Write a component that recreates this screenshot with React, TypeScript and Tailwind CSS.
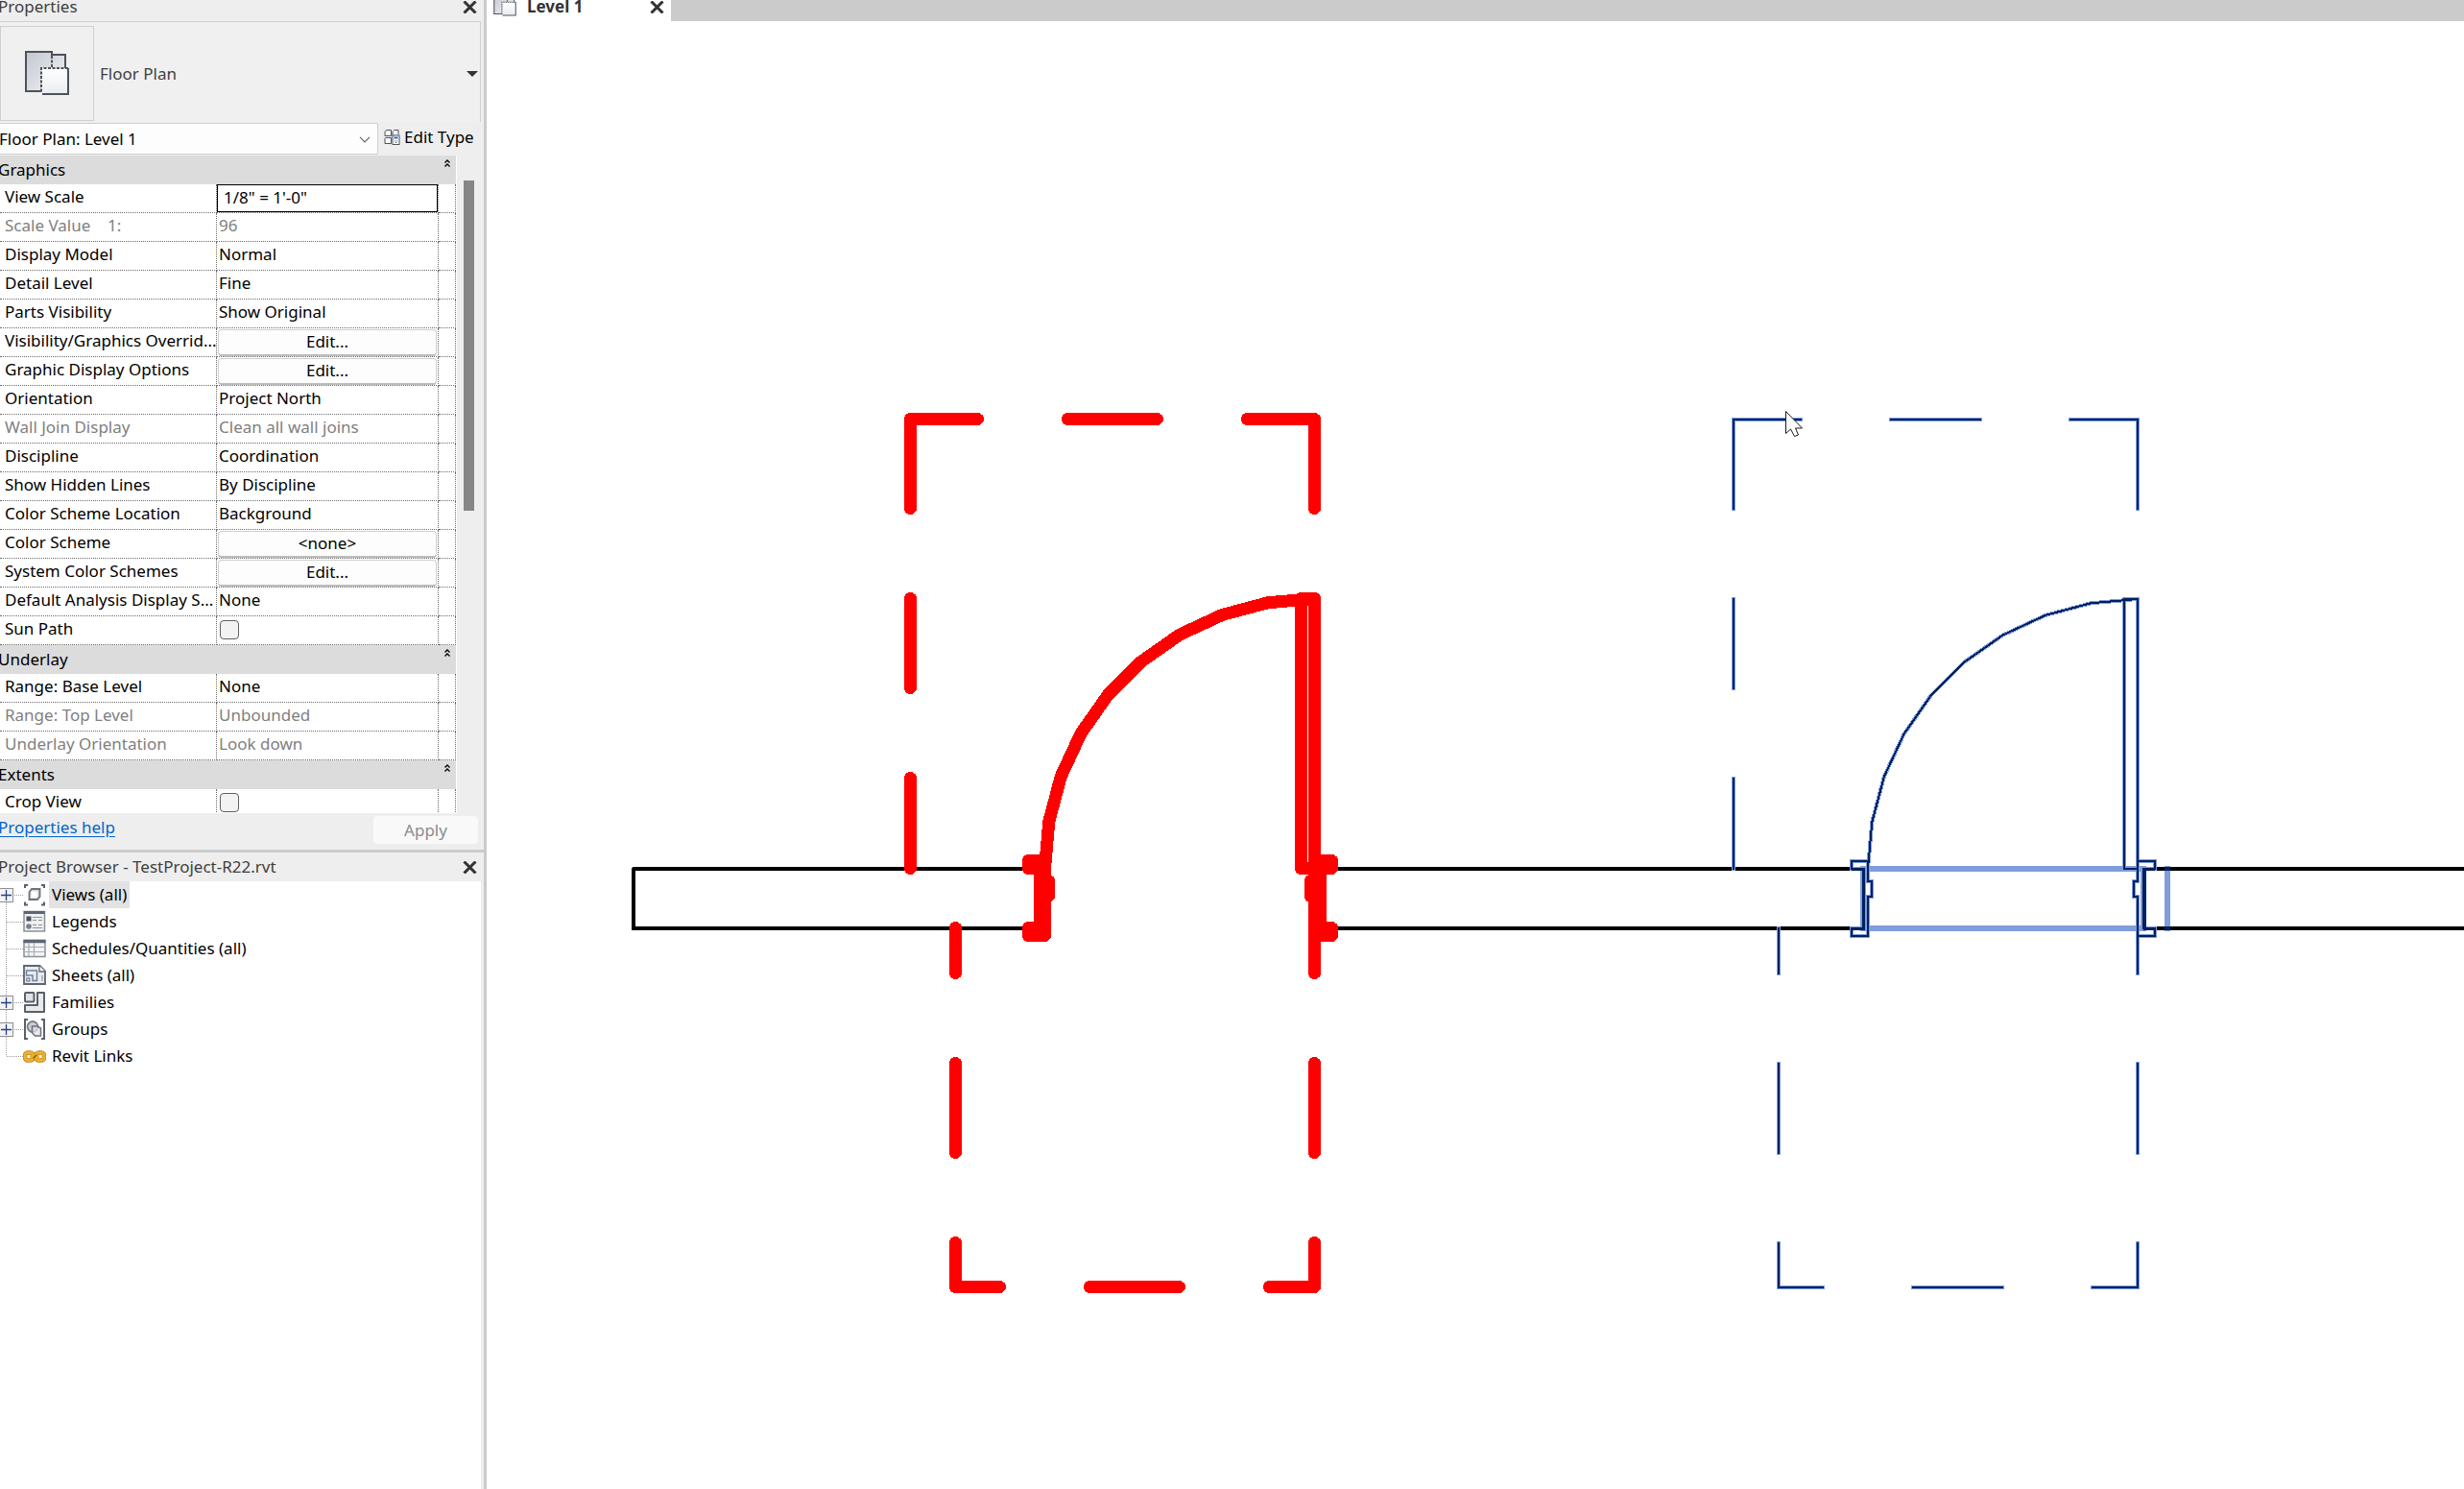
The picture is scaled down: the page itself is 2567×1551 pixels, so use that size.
import { useState } from "react";
import type { ReactNode } from "react";

type Row = {
  label: string;
  kind: "text" | "input" | "button" | "check";
  value?: string;
  disabled?: boolean;
};

type Section = { title: string; rows: Row[] };

const sections: Section[] = [
  {
    title: "Graphics",
    rows: [
      { label: "View Scale", kind: "input", value: "1/8\" = 1'-0\"" },
      { label: "Scale Value    1:", kind: "text", value: "96", disabled: true },
      { label: "Display Model", kind: "text", value: "Normal" },
      { label: "Detail Level", kind: "text", value: "Fine" },
      { label: "Parts Visibility", kind: "text", value: "Show Original" },
      { label: "Visibility/Graphics Overrid...", kind: "button", value: "Edit..." },
      { label: "Graphic Display Options", kind: "button", value: "Edit..." },
      { label: "Orientation", kind: "text", value: "Project North" },
      { label: "Wall Join Display", kind: "text", value: "Clean all wall joins", disabled: true },
      { label: "Discipline", kind: "text", value: "Coordination" },
      { label: "Show Hidden Lines", kind: "text", value: "By Discipline" },
      { label: "Color Scheme Location", kind: "text", value: "Background" },
      { label: "Color Scheme", kind: "button", value: "<none>" },
      { label: "System Color Schemes", kind: "button", value: "Edit..." },
      { label: "Default Analysis Display S...", kind: "text", value: "None" },
      { label: "Sun Path", kind: "check" },
    ],
  },
  {
    title: "Underlay",
    rows: [
      { label: "Range: Base Level", kind: "text", value: "None" },
      { label: "Range: Top Level", kind: "text", value: "Unbounded", disabled: true },
      { label: "Underlay Orientation", kind: "text", value: "Look down", disabled: true },
    ],
  },
  {
    title: "Extents",
    rows: [{ label: "Crop View", kind: "check" }],
  },
];

/* ---------- icons ---------- */

function PlanIcon({ className }: { className: string }) {
  return (
    <svg viewBox="0 0 46 47" className={className} aria-hidden="true">
      <defs>
        <linearGradient id="planBack" x1="0" y1="0" x2="1" y2="1">
          <stop offset="0" stopColor="#c3c7d1" />
          <stop offset="1" stopColor="#f6f7f8" />
        </linearGradient>
        <linearGradient id="planFront" x1="0" y1="0" x2="0" y2="1">
          <stop offset="0" stopColor="#ffffff" />
          <stop offset="1" stopColor="#e9edef" />
        </linearGradient>
      </defs>
      <path d="M1 1H28V3H42V18H45V45H18V42H1Z" fill="url(#planBack)" />
      <rect x="17" y="18" width="28" height="27" fill="url(#planFront)" />
      <path d="M17 42H1V1H28V4H42V18" fill="none" stroke="#4d525b" strokeWidth="2" />
      <path d="M45 18V45H18" fill="none" stroke="#4d525b" strokeWidth="2" />
      <path d="M28 5V18M45 18H17V44" fill="none" stroke="#4d525b" strokeWidth="2" strokeDasharray="3 1.5" />
    </svg>
  );
}

function CloseIcon() {
  return (
    <svg viewBox="0 0 15 13" className="h-[13px] w-[15px]" aria-hidden="true">
      <path d="M1.5 0.5L13.5 12.5M13.5 0.5L1.5 12.5" stroke="#333" strokeWidth="3" />
    </svg>
  );
}

function EditTypeIcon() {
  return (
    <svg viewBox="0 0 17 16" className="h-4 w-[17px]" aria-hidden="true">
      <path d="M1.5 1.5L3 .5H7.500V6.500H1V2ZM9.500 1.500L10.500 .5H15V5M9 2V6.500M1 9V14.500H7.500V8.500H1.500" fill="#f7f8fa" stroke="#4d525b" />
      <rect x="9" y="6" width="7" height="9.500" fill="#fff" stroke="#4d525b" />
      <path d="M10.500 8.500H14.500" stroke="#1f6fc4" strokeWidth="2" />
      <path d="M11 12H12M13 12H14M12 13.500H13" stroke="#4d525b" />
    </svg>
  );
}

function Collapse() {
  return (
    <svg viewBox="0 0 6 8" className="h-2 w-1.5" aria-hidden="true">
      <path d="M.5 3.500L3 1L5.500 3.500M.5 7.500L3 5L5.500 7.500" fill="none" stroke="#000" strokeWidth="1.300" />
    </svg>
  );
}

function TreeIcon({ children }: { children: ReactNode }) {
  return (
    <svg viewBox="0 0 24 24" className="h-6 w-6 shrink-0" fill="none" stroke="#5b6069" strokeWidth="1.800" aria-hidden="true">
      {children}
    </svg>
  );
}

const treeItems: { label: string; expandable?: boolean; icon: ReactNode }[] = [
  {
    label: "Views (all)",
    expandable: true,
    icon: (
      <TreeIcon>
        <path d="M5 2H2V5M19 2H22V5M5 22.500H2V19.500M19 22.500H22V19.500" strokeWidth="2" />
        <path d="M6.500 9L9 6H17.500V14L15 17H6.500Z" fill="#d8dbe0" stroke="#6c717a" />
        <rect x="8.500" y="8.500" width="6.500" height="6.500" fill="#fff" stroke="none" />
      </TreeIcon>
    ),
  },
  {
    label: "Legends",
    icon: (
      <TreeIcon>
        <rect x="1" y="1.500" width="21.500" height="20.500" fill="#eef0f2" stroke="#8b9099" strokeWidth="1.500" />
        <path d="M1 2.500H22.500" stroke="#5b6573" strokeWidth="3" />
        <rect x="3.500" y="6.500" width="5" height="5" fill="#4d525b" stroke="none" />
        <circle cx="6" cy="17" r="2.800" fill="#7b8089" stroke="none" />
        <path d="M10 7.500H20M10 10.500H14M16 10.500H20M10 15.500H14M16 15.500H20M10 18.500H20" stroke="#8b9099" strokeWidth="1.200" />
      </TreeIcon>
    ),
  },
  {
    label: "Schedules/Quantities (all)",
    icon: (
      <TreeIcon>
        <rect x="1" y="3.500" width="22" height="17" fill="#f1f3f5" stroke="#8b9099" strokeWidth="1.500" />
        <path d="M.5 4.500H23.500" stroke="#5b6573" strokeWidth="3.500" />
        <path d="M6 6V20M11.500 6V20M1 10.500H23M1 15.500H23" stroke="#a9adb4" strokeWidth="1.200" />
      </TreeIcon>
    ),
  },
  {
    label: "Sheets (all)",
    icon: (
      <TreeIcon>
        <path d="M1 2H17.500L23 7.500V21H1Z" fill="#e8ebef" stroke="#5b6573" />
        <path d="M17 2V8H23" fill="#fff" stroke="#5b6573" strokeWidth="1.300" />
        <path d="M3.500 7H14.500V17.500H10V12H3.500Z" stroke="#71829c" strokeWidth="1.500" />
        <rect x="3.800" y="15" width="3" height="3" stroke="#71829c" strokeWidth="1.200" />
        <path d="M20 12V18" stroke="#8b9099" strokeWidth="1.200" />
      </TreeIcon>
    ),
  },
  {
    label: "Families",
    expandable: true,
    icon: (
      <TreeIcon>
        <rect x="2" y="2" width="9.500" height="9.500" rx="1" fill="#dfe2e6" strokeWidth="2" />
        <path d="M15 2H22V22H2V15H15Z" fill="#e8ebee" strokeLinejoin="round" strokeWidth="2" />
      </TreeIcon>
    ),
  },
  {
    label: "Groups",
    expandable: true,
    icon: (
      <TreeIcon>
        <path d="M5 2H2V22H5M19 2H22V22H19" strokeWidth="2" />
        <circle cx="10" cy="9.500" r="5.500" fill="#c9ced6" stroke="#7b8089" />
        <path d="M9.500 9H15L18.500 11V19H12.500L9.500 16Z" fill="#dfe2ea" fillOpacity="0.7" stroke="#6c717a" strokeWidth="1.500" />
      </TreeIcon>
    ),
  },
  {
    label: "Revit Links",
    icon: (
      <TreeIcon>
        <rect x="2" y="8.500" width="8.500" height="8" rx="3" fill="#fff" stroke="#b97c12" strokeWidth="4.600" />
        <rect x="13.500" y="8.500" width="8.500" height="8" rx="3" fill="#fff" stroke="#b97c12" strokeWidth="4.600" />
        <rect x="2" y="8.500" width="8.500" height="8" rx="3" stroke="#ecb02c" strokeWidth="3.200" />
        <rect x="13.500" y="8.500" width="8.500" height="8" rx="3" stroke="#ecb02c" strokeWidth="3.200" />
        <path d="M7 12.500H17" stroke="#ecb02c" strokeWidth="2.500" />
        <path d="M10.500 14.500L14 11" stroke="#8a4f0b" strokeWidth="1.500" />
      </TreeIcon>
    ),
  },
];

/* ---------- properties palette ---------- */

function PanelTitle({ children }: { children: ReactNode }) {
  return <h2 className="-ml-0.5 text-[#3f3f3f]">{children}</h2>;
}

function ValueCell({ row, id }: { row: Row; id: string }) {
  if (row.kind === "input") {
    return (
      <input
        id={id}
        defaultValue={row.value}
        className="block h-[29px] w-[230px] border border-black bg-white pb-0.5 pl-1.5 text-black outline-none"
      />
    );
  }
  if (row.kind === "button") {
    return (
      <button
        id={id}
        className="ml-px block h-[28px] w-[228px] rounded-[4px] border border-b-2 border-[#d0d0d0] border-b-[#bcbcbc] bg-[#fdfdfd] leading-[24px]"
      >
        {row.value}
      </button>
    );
  }
  if (row.kind === "check") {
    return (
      <input
        id={id}
        type="checkbox"
        className="mb-0.5 ml-[3px] block size-5 appearance-none rounded-[4px] border border-[#606060] bg-[#f3f3f3] checked:bg-[#005fb8]"
      />
    );
  }
  return <span className="block pb-1 pl-0.5">{row.value}</span>;
}

function PropertyGrid() {
  return (
    <table className="w-[475px] table-fixed border-separate border-spacing-0 bg-white">
      <colgroup>
        <col className="w-[226px]" />
        <col className="w-[231px]" />
        <col className="w-[18px]" />
      </colgroup>
      {sections.map((section) => (
        <tbody key={section.title}>
          <tr className="h-[30px] bg-[#dcdcdc]">
            <th colSpan={2} className="p-0 text-left font-normal">
              <span className="-ml-0.5 block">{section.title}</span>
            </th>
            <td className="p-0 align-top">
              <button aria-label={"Collapse " + section.title} className="mt-1 ml-1.5 block">
                <Collapse />
              </button>
            </td>
          </tr>
          {section.rows.map((row) => {
            const id = row.label.replace(/[^A-Za-z]/g, "");
            return (
              <tr key={row.label} className={row.disabled ? "h-[30px] text-[#808080]" : "h-[30px]"}>
                <th className="border-r border-b border-dotted border-[#6b6b6b] p-0 text-left font-normal">
                  <label htmlFor={id} className="block pb-1 pl-[5px] whitespace-pre">
                    {row.label}
                  </label>
                </th>
                <td className="border-r border-b border-dotted border-[#6b6b6b] p-0">
                  <ValueCell row={row} id={id} />
                </td>
                <td className="border-r border-b border-dotted border-[#6b6b6b] p-0" />
              </tr>
            );
          })}
        </tbody>
      ))}
    </table>
  );
}

function PropertiesPanel() {
  return (
    <section>
      <header className="mr-[3px] flex h-[23px] items-start justify-between border-b border-[#cfcfcf] pr-1 leading-[14px]">
        <PanelTitle>Properties</PanelTitle>
        <button aria-label="Close properties" className="mt-px">
          <CloseIcon />
        </button>
      </header>

      <button className="mb-px flex h-[104px] w-[501px] items-center border-r border-[#cfcfcf] bg-[#f0f0f0] pt-[3px] pr-0.5">
        <span className="flex h-[99px] w-[98px] items-center justify-center border border-[#cfcfcf]">
          <PlanIcon className="h-[47px] w-[46px]" />
        </span>
        <span className="grow pl-1.5 text-left text-[#3f3f3f]">Floor Plan</span>
        <svg viewBox="0 0 12 6" className="h-1.5 w-3" aria-hidden="true">
          <path d="M0 0H12L6 6Z" fill="#333" />
        </svg>
      </button>

      <div className="flex h-[34px] items-start">
        <div className="relative">
          <select
            aria-label="View"
            className="-ml-0.5 block h-[33px] w-[396px] appearance-none rounded-[2px] border border-[#cfcfcf] bg-[#fdfdfd] text-black"
          >
            <option>Floor Plan: Level 1</option>
          </select>
          <svg viewBox="0 0 12 7" className="pointer-events-none absolute top-3.5 right-2 h-[7px] w-3" aria-hidden="true">
            <path d="M1 .8L6 5.800L11 .8" fill="none" stroke="#666" strokeWidth="1.200" />
          </svg>
        </div>
        <button className="ml-1.5 flex h-[30px] items-center gap-1 text-black">
          <EditTypeIcon />
          Edit Type
        </button>
      </div>

      <div className="flex h-[685px] overflow-hidden">
        <PropertyGrid />
        <div className="w-px bg-white" />
        <div className="mt-[26px] ml-[7px] h-[344px] w-[11px] bg-[#868686]" />
      </div>

      <footer className="flex h-[38px] items-start justify-between pr-1.5">
        <a href="#help" className="-ml-0.5 mt-[3px] text-[#0066cc] underline underline-offset-[3px]">
          Properties help
        </a>
        <button disabled className="mt-[3px] h-[29px] w-[109px] rounded-[4px] bg-[#f9f9f9] text-[#8b8b8b]">
          Apply
        </button>
      </footer>
    </section>
  );
}

/* ---------- project browser ---------- */

function ProjectBrowser() {
  return (
    <section className="flex min-h-0 grow flex-col border-t-[3px] border-[#cbcbcb]">
      <header className="mr-[3px] flex h-[30px] items-center justify-between pr-1">
        <PanelTitle>Project Browser - TestProject-R22.rvt</PanelTitle>
        <button aria-label="Close project browser">
          <CloseIcon />
        </button>
      </header>
      <ul className="mr-[3px] grow bg-white">
        {treeItems.map((item, i) => (
          <li key={item.label} className="flex h-7 items-center">
            <svg viewBox="0 0 24 28" className="h-7 w-6 shrink-0" fill="none" aria-hidden="true">
              <path
                d={i === 0 ? "M6.500 14V28M7 14.500H24" : i === treeItems.length - 1 ? "M6.500 0V14M7 14.500H24" : "M6.500 0V28M7 14.500H24"}
                stroke="#999"
                strokeDasharray="1 1"
              />
              {item.expandable && (
                <>
                  <rect x="-1" y="7.500" width="14.500" height="14" fill="#f4f4f4" stroke="#8f8f8f" />
                  <path d="M1 14.500H12M6.500 9V20" stroke="#27408b" strokeWidth="1.300" />
                </>
              )}
            </svg>
            {item.icon}
            <span className={i === 0 ? "ml-[3px] h-7 bg-[#e2e2e2] px-[3px] leading-7" : "ml-[3px] h-7 px-[3px] leading-7"}>
              {item.label}
            </span>
          </li>
        ))}
      </ul>
    </section>
  );
}

/* ---------- drawing area ---------- */

// Swing arc, faceted in 10 degree steps round the hinge
const HINGE = { x: 2227, y: 905, r: 281 };
const swing = Array.from({ length: 10 }, (_, i) => {
  const a = (i * 10 * Math.PI) / 180;
  const x = HINGE.x - HINGE.r * Math.cos(a);
  const y = HINGE.y - HINGE.r * Math.sin(a);
  return (i === 0 ? "M" : "L") + x.toFixed(1) + " " + y.toFixed(1);
}).join("");

const clearance = [
  "M1876 437H1806V530M1970 437H2063M2157 437H2227V530",
  "M1806 624V717M1806 811V905",
  "M1853 967V1014M1853 1108V1201M1853 1295V1341H1899",
  "M1993 1341H2086M2180 1341H2227V1295",
  "M2227 967V1014M2227 1108V1201",
].join("");

const frame = [
  "M1929 897H1946V918H1950V934H1946V975H1929V967H1941V905H1929Z",
  "M2227 897H2245V905H2233V967H2245V975H2227V934H2223V918H2227Z",
].join("");

const leaf = "M2213 624H2227V905H2213Z";

function Door({ color, width, cap }: { color: string; width: number; cap: "round" | "square" }) {
  return (
    <g fill="none" stroke={color} strokeWidth={width} strokeLinecap={cap} strokeLinejoin={cap === "round" ? "round" : "miter"}>
      <path d={clearance} />
      <path d={frame} />
      <path d={swing} />
      <path d={leaf} />
    </g>
  );
}

function Drawing() {
  return (
    <svg
      viewBox="507 22 2060 1529"
      preserveAspectRatio="xMinYMin slice"
      className="min-h-0 w-full grow"
      shapeRendering="crispEdges"
      role="img"
      aria-label="Level 1 floor plan with two doors"
    >
      {/* walls */}
      <path
        d="M1080 905H660V967H1080M1376 905H1940M1376 967H1940M2234 905H2800M2234 967H2800"
        fill="none"
        stroke="#000"
        strokeWidth="4"
        strokeLinejoin="round"
      />

      <g transform="translate(-857.5 -0.5)">
        <Door color="#f00" width={13} cap="round" />
      </g>

      {/* selected door: cut lines, halo, then the lines themselves */}
      <path d="M1941 905H2233V967H1941Z" fill="none" stroke="#7f9ddd" strokeWidth="6" />
      <path d="M2258 902V970" stroke="#7f9ddd" strokeWidth="6" />
      <path d="M2255 905H2261M2255 967H2261" stroke="#002060" strokeWidth="4" />
      <Door color="#7f9ddd" width={4} cap="square" />
      <Door color="#002060" width={2} cap="square" />
      <path d="M1929 905H1941V967H1929M2245 905H2234V967H2245" fill="none" stroke="#002060" strokeWidth="3" />

      {/* pointer */}
      <path
        d="M1860.500 428.500V451.500L1865.500 447L1869.500 454.500L1873.500 453L1870.500 446H1877.500Z"
        fill="#fff"
        stroke="#1a1a1a"
        shapeRendering="auto"
      />
    </svg>
  );
}

export default function App() {
  const [tabOpen, setTabOpen] = useState(true);

  return (
    <div className="flex h-screen overflow-hidden bg-white font-['Noto_Sans','Open_Sans',sans-serif] text-[17px] leading-6 text-black">
      <aside className="flex w-[507px] shrink-0 flex-col overflow-hidden border-r-[3px] border-[#cbcbcb] bg-[#eeeeee]">
        <PropertiesPanel />
        <ProjectBrowser />
      </aside>

      <main className="flex min-w-0 grow flex-col">
        <div className="flex h-[22px] bg-[#cbcbcb]">
          {tabOpen && (
            <div className="flex w-[192px] items-start overflow-hidden bg-white pr-[7px] pl-[7px] leading-[14px]">
              <PlanIcon className="-mt-[7px] h-6 w-6" />
              <span className="grow pl-[11px] font-bold text-[#333]">Level 1</span>
              <button aria-label="Close Level 1" onClick={() => setTabOpen(false)} className="mt-px">
                <CloseIcon />
              </button>
            </div>
          )}
        </div>
        <Drawing />
      </main>
    </div>
  );
}
